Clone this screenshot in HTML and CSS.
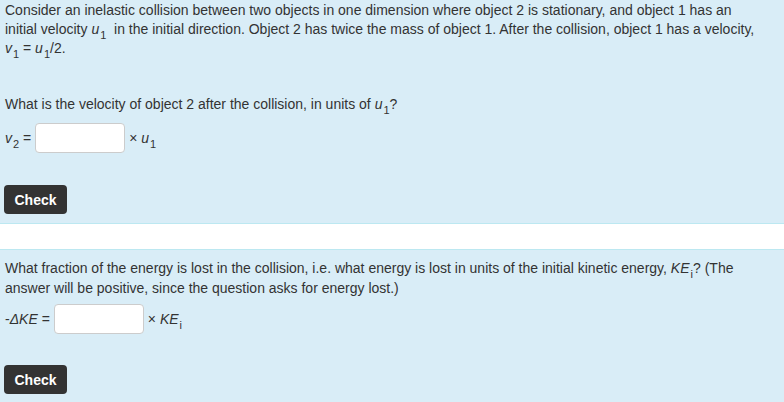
FILE: index.html
```html
<!DOCTYPE html>
<html>
<head>
<meta charset="utf-8">
<link rel="stylesheet" href="styles.css">
</head>
<body>
<div class="panel panel-first">
  <p class="intro">Consider an inelastic collision between two objects in one dimension where object 2 is stationary, and object 1 has an initial velocity <span class="m"><i>u</i><sub>1</sub></span>&nbsp; in the initial direction. Object 2 has twice the mass of object 1. After the collision, object 1 has a velocity, <span class="m nowrap"><i>v</i><sub>1</sub> = <i>u</i><sub>1</sub>/2</span>.</p>
  <p class="question">What is the velocity of object 2 after the collision, in units of <span class="m"><i>u</i><sub>1</sub></span>?</p>
  <div class="answer-row">
    <span class="m label"><i>v</i><sub>2</sub> =</span>
    <input class="answer" type="text">
    <span class="m unit">× <i>u</i><sub>1</sub></span>
  </div>
  <button class="check">Check</button>
</div>
<div class="spacer"></div>
<div class="panel panel-second">
  <p class="question2">What fraction of the energy is lost in the collision, i.e. what energy is lost in units of the initial kinetic energy, <span class="m"><i>KE</i><sub>i</sub></span>? (The answer will be positive, since the question asks for energy lost.)</p>
  <div class="answer-row answer-row-second">
    <span class="m label">-<i>ΔKE</i> =</span>
    <input class="answer" type="text">
    <span class="m unit">× <i>KE</i><sub>i</sub></span>
  </div>
  <button class="check">Check</button>
</div>
</body>
</html>
```
FILE: styles.css
```css
html, body {
  margin: 0;
  padding: 0;
  background: #ffffff;
}
body {
  font-family: "Liberation Sans", Arial, Helvetica, sans-serif;
  font-size: 14px;
  line-height: 20px;
  color: #333333;
}
.panel {
  background: #d9edf7;
  padding: 0 20px 0 5px;
}
.panel-first {
  padding-top: 1px;
  padding-bottom: 9px;
  border-bottom: 1px solid #bce8f1;
}
.panel-second {
  padding-top: 8px;
  padding-bottom: 10px;
  border-top: 1px solid #bce8f1;
}
.spacer {
  height: 25px;
}
p {
  margin: 0;
}
.intro {
  line-height: 19px;
  margin-bottom: 36px;
}
.question {
  margin-bottom: 9px;
}
.question2 {
  margin-bottom: 6px;
}
.nowrap {
  white-space: nowrap;
}
.m i {
  font-style: italic;
}
.m sub {
  font-size: 11px;
  line-height: 0;
  vertical-align: -5px;
  margin-left: 1px;
}
.answer-row {
  display: flex;
  align-items: center;
  height: 30px;
  margin-bottom: 32px;
}
.answer-row-second {
  margin-bottom: 31px;
}
.label {
  margin-right: 4px;
}
.answer {
  box-sizing: border-box;
  width: 90px;
  height: 30px;
  border: 1px solid #cccccc;
  border-radius: 4px;
  background: #ffffff;
  margin: 0;
  padding: 0 6px;
}
.unit {
  margin-left: 4px;
}
.check {
  display: block;
  box-sizing: border-box;
  height: 29px;
  width: 63px;
  margin-left: -1px;
  padding: 0;
  border: none;
  border-radius: 4px;
  background: #333333;
  color: #ffffff;
  font-family: "Liberation Sans", Arial, Helvetica, sans-serif;
  font-size: 14px;
  font-weight: bold;
}
```
